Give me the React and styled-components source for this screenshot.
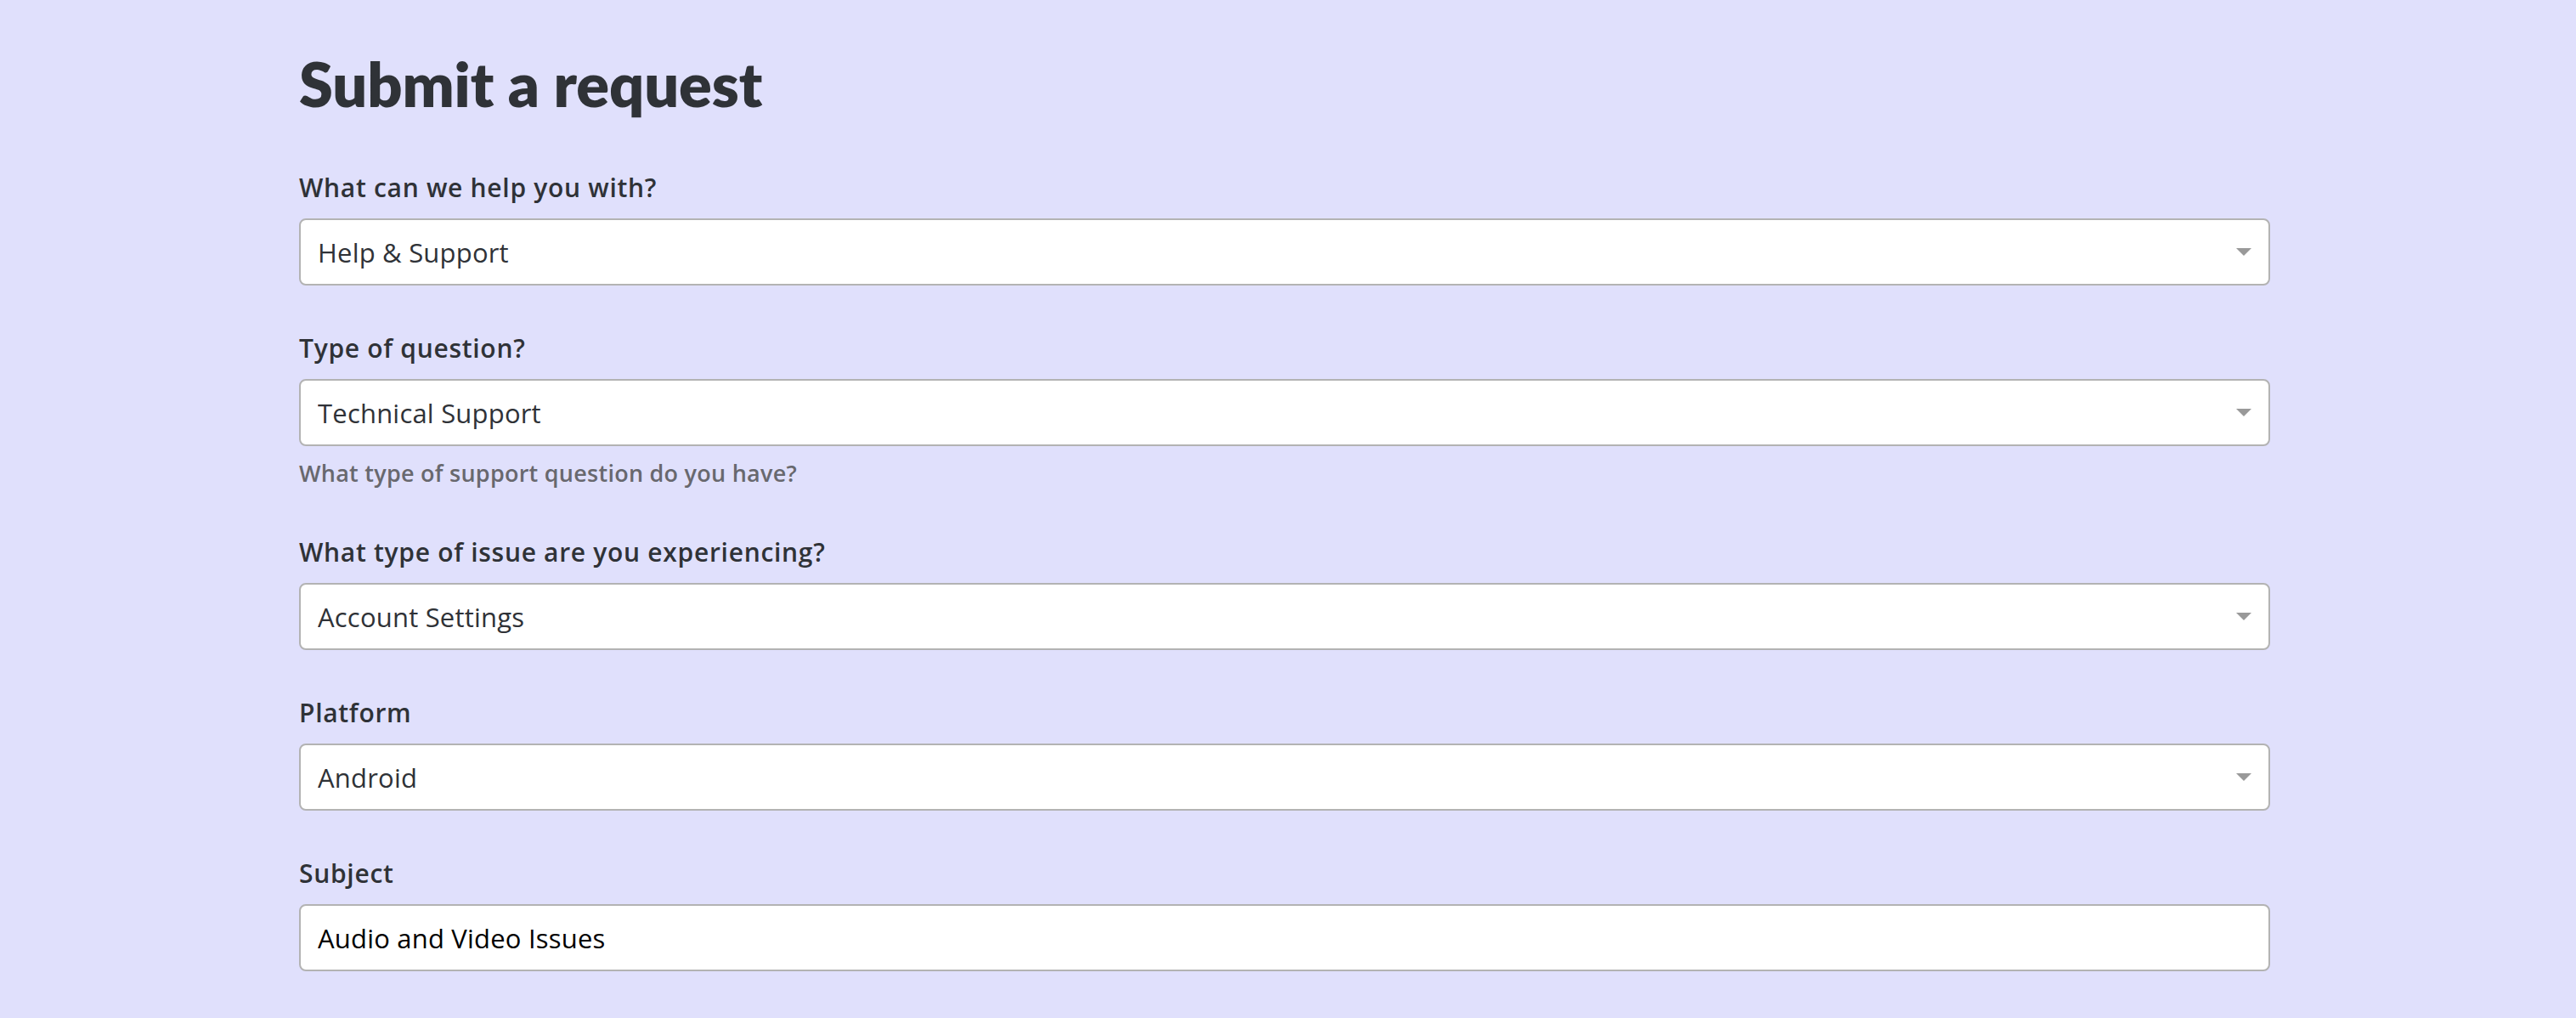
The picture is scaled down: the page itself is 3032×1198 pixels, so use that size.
import React from 'react';
import styled, { createGlobalStyle } from 'styled-components';

const GlobalStyle = createGlobalStyle`
    html, body {
        margin: 0;
        padding: 0;
        background: #e0e0fc;
    }
    body {
        font-family: "Open Sans", Lato, sans-serif;
    }
`;

const Page = styled.div`
    min-height: 100vh;
    background: #e0e0fc;
    padding: 62px 0 0 352px;
    box-sizing: border-box;
`;

const Form = styled.form`
    width: 2320px;
    display: flex;
    flex-direction: column;
`;

const Title = styled.h1`
    margin: 0 0 73px;
    font-family: Lato, "Open Sans", sans-serif;
    font-size: 72px;
    line-height: 1;
    font-weight: 800;
    color: #2f3237;
    letter-spacing: -0.1px;
`;

const Field = styled.div`
    display: flex;
    flex-direction: column;
    margin-bottom: 60px;
`;

const Label = styled.label`
    font-size: 30px;
    line-height: 28px;
    font-weight: 600;
    letter-spacing: 0.7px;
    color: #2f3237;
    margin-bottom: 22px;
`;

const Hint = styled.p`
    margin: 18px 0 6px;
    font-size: 27px;
    line-height: 1;
    font-weight: 600;
    letter-spacing: 0.25px;
    color: #68686e;
`;

const SelectWrap = styled.div`
    position: relative;

    &::after {
        content: "";
        position: absolute;
        right: 22px;
        top: 35px;
        border-left: 9px solid transparent;
        border-right: 9px solid transparent;
        border-top: 9px solid #999;
        pointer-events: none;
    }
`;

const boxStyles = `
    width: 100%;
    height: 79px;
    box-sizing: border-box;
    border: 2px solid #b3b3b3;
    border-radius: 8px;
    background: #fff;
    padding: 0 20px;
    font-family: "Open Sans", Lato, sans-serif;
    font-size: 31px;
    letter-spacing: 0.2px;
    outline: none;
`;

const Select = styled.select`
    ${boxStyles}
    appearance: none;
    -webkit-appearance: none;
    color: #2f3237;
`;

const Input = styled.input`
    ${boxStyles}
    color: #000;
`;

const fields = [
    { id: 'ticket_form', label: 'What can we help you with?', value: 'Help & Support' },
    { id: 'question_type', label: 'Type of question?', value: 'Technical Support', hint: 'What type of support question do you have?' },
    { id: 'issue_type', label: 'What type of issue are you experiencing?', value: 'Account Settings' },
    { id: 'platform', label: 'Platform', value: 'Android' },
];

function App() {
    return (
        <Page>
            <GlobalStyle />
            <Form onSubmit={e => e.preventDefault()}>
                <Title>Submit a request</Title>
                {fields.map(f => (
                    <Field key={f.id}>
                        <Label htmlFor={f.id}>{f.label}</Label>
                        <SelectWrap>
                            <Select id={f.id} defaultValue={f.value}>
                                <option>{f.value}</option>
                            </Select>
                        </SelectWrap>
                        {f.hint && <Hint>{f.hint}</Hint>}
                    </Field>
                ))}
                <Field>
                    <Label htmlFor="subject">Subject</Label>
                    <Input id="subject" defaultValue="Audio and Video Issues" />
                </Field>
            </Form>
        </Page>
    );
}

export default App;
